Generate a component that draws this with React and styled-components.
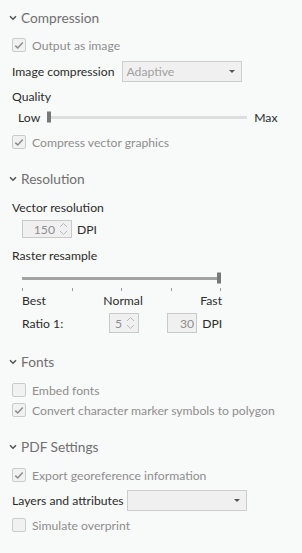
import React from "react";
import styled, { createGlobalStyle } from "styled-components";

const Global = createGlobalStyle`
  html, body { margin: 0; padding: 0; background: #f8f9f9; }
  body { font-family: "Segoe UI", Lato, "Noto Sans", sans-serif; font-size: 12.2px; color: #2b2b2b; }
  * { box-sizing: border-box; }
`;

const Panel = styled.div`
  width: 302px;
  height: 553px;
  padding: 7px 0 0 9px;
  background: #f8f9f9;
  overflow: hidden;
`;

const Section = styled.section`
  display: flex;
  flex-direction: column;
  margin-top: ${(p) => p.$mt || 0}px;
`;

const Header = styled.div`
  display: flex;
  align-items: center;
  height: 20px;
  gap: 4px;
  color: #707070;
  font-size: 13.7px;
`;

const Body = styled.div`
  display: flex;
  flex-direction: column;
  padding-left: 3px;
`;

const Row = styled.div`
  display: flex;
  align-items: center;
  height: ${(p) => p.$h || 20}px;
  margin-top: ${(p) => p.$mt || 0}px;
  padding-left: ${(p) => p.$pl || 0}px;
  white-space: nowrap;
`;

const Label = styled.span`
  color: ${(p) => (p.$disabled ? "#8e8e8e" : "#2b2b2b")};
  margin-right: ${(p) => p.$mr || 0}px;
`;

const Box = styled.span`
  width: 14px;
  height: 14px;
  border: 1px solid #cbcbcb;
  border-radius: 2px;
  background: #f1f1f1;
  display: inline-flex;
  align-items: center;
  justify-content: center;
  margin-right: 6px;
  flex: none;
`;

const Chevron = () => (
  <svg width="8" height="6" viewBox="0 0 8 6" style={{ marginTop: 1 }}>
    <path d="M1 1.2 L4 4.2 L7 1.2" fill="none" stroke="#555" strokeWidth="1.6" />
  </svg>
);

const Check = ({ checked, label }) => (
  <>
    <Box>
      {checked && (
        <svg width="10" height="9" viewBox="0 0 10 9">
          <path d="M1.3 4.6 L3.8 7 L8.7 1.6" fill="none" stroke="#8c8c8c" strokeWidth="1.5" />
        </svg>
      )}
    </Box>
    <Label $disabled>{label}</Label>
  </>
);

const Select = styled.div`
  width: ${(p) => p.$w}px;
  height: 21px;
  border: 1px solid #cdcdcd;
  background: #f0f0f1;
  display: flex;
  align-items: center;
  justify-content: space-between;
  padding: 0 6px 0 3px;
  color: #a0a0a0;
  margin-left: ${(p) => p.$ml || 0}px;
`;

const Arrow = styled.span`
  width: 0;
  height: 0;
  border-left: 3px solid transparent;
  border-right: 3px solid transparent;
  border-top: 3px solid #555;
`;

const Spin = styled.div`
  width: ${(p) => p.$w}px;
  height: ${(p) => p.$h || 18}px;
  border: 1px solid #c9c9c9;
  background: #f0f0f1;
  display: flex;
  align-items: center;
  justify-content: flex-end;
  color: #8e8e8e;
  padding-right: ${(p) => (p.$arrows ? 3 : 2)}px;
  gap: 4px;
  margin-left: ${(p) => p.$ml || 0}px;
  margin-right: 5px;
`;

const SpinArrows = () => (
  <svg width="9" height="14" viewBox="0 0 9 14">
    <path d="M1 5 L4.5 1.5 L8 5" fill="none" stroke="#b8b8b8" strokeWidth="1" />
    <path d="M1 9 L4.5 12.5 L8 9" fill="none" stroke="#b8b8b8" strokeWidth="1" />
  </svg>
);

const Track = styled.div`
  position: relative;
  width: ${(p) => p.$w}px;
  height: ${(p) => p.$th}px;
  background: ${(p) => p.$color};
  margin: 0 ${(p) => p.$mr || 0}px 0 ${(p) => p.$ml || 0}px;
`;

const Thumb = styled.span`
  position: absolute;
  top: 50%;
  ${(p) => (p.$right ? "right: -3px;" : "left: -4px;")}
  width: 4px;
  height: 11px;
  transform: translateY(-50%);
  background: #777;
`;

const Ticks = styled.div`
  display: flex;
  justify-content: space-between;
  width: 199px;
  height: 3px;
  margin-top: 2px;
  margin-left: 10px;
`;

const Tick = styled.span`
  width: 1px;
  height: 3px;
  background: #9a9a9a;
`;

const TickLabels = styled.div`
  display: flex;
  justify-content: space-between;
  width: 200px;
  height: 18px;
  margin-left: 10px;
  align-items: center;
`;

export default function App() {
  return (
    <>
      <Global />
      <Panel>
        <Section>
          <Header><Chevron />Compression</Header>
          <Body>
            <Row $mt={8}><Check checked label="Output as image" /></Row>
            <Row $mt={5} $h={22}>
              <Label>Image compression</Label>
              <Select $w={120} $ml={8}>Adaptive<Arrow /></Select>
            </Row>
            <Row $mt={4}><Label>Quality</Label></Row>
            <Row $mt={1} $pl={6}>
              <Label>Low</Label>
              <Track $w={196} $th={3} $color="#dedede" $ml={11} $mr={7}>
                <Thumb />
              </Track>
              <Label>Max</Label>
            </Row>
            <Row $mt={5}><Check checked label="Compress vector graphics" /></Row>
          </Body>
        </Section>

        <Section $mt={16}>
          <Header><Chevron />Resolution</Header>
          <Body>
            <Row $mt={9}><Label>Vector resolution</Label></Row>
            <Row $mt={2} $pl={10}>
              <Spin $w={50} $arrows>150<SpinArrows /></Spin>
              <Label>DPI</Label>
            </Row>
            <Row $mt={6}><Label>Raster resample</Label></Row>
            <Row $mt={5} $h={16}>
              <Track $w={196} $th={3} $color="#a3a3a3" $ml={10}>
                <Thumb $right />
              </Track>
            </Row>
            <Ticks>
              <Tick /><Tick /><Tick /><Tick /><Tick />
            </Ticks>
            <TickLabels>
              <Label>Best</Label>
              <Label>Normal</Label>
              <Label>Fast</Label>
            </TickLabels>
            <Row $mt={4} $pl={10}>
              <Label>Ratio 1:</Label>
              <Spin $w={30} $h={20} $ml={46} $arrows>5<SpinArrows /></Spin>
              <Spin $w={30} $h={20} $ml={23}>30</Spin>
              <Label>DPI</Label>
            </Row>
          </Body>
        </Section>

        <Section $mt={18}>
          <Header><Chevron />Fonts</Header>
          <Body>
            <Row $mt={9}><Check label="Embed fonts" /></Row>
            <Row><Check checked label="Convert character marker symbols to polygon" /></Row>
          </Body>
        </Section>

        <Section $mt={16}>
          <Header><Chevron />PDF Settings</Header>
          <Body>
            <Row $mt={9}><Check checked label="Export georeference information" /></Row>
            <Row $mt={4} $h={22}>
              <Label>Layers and attributes</Label>
              <Select $w={120} $ml={3}><span /><Arrow /></Select>
            </Row>
            <Row $mt={4}><Check label="Simulate overprint" /></Row>
          </Body>
        </Section>
      </Panel>
    </>
  );
}
